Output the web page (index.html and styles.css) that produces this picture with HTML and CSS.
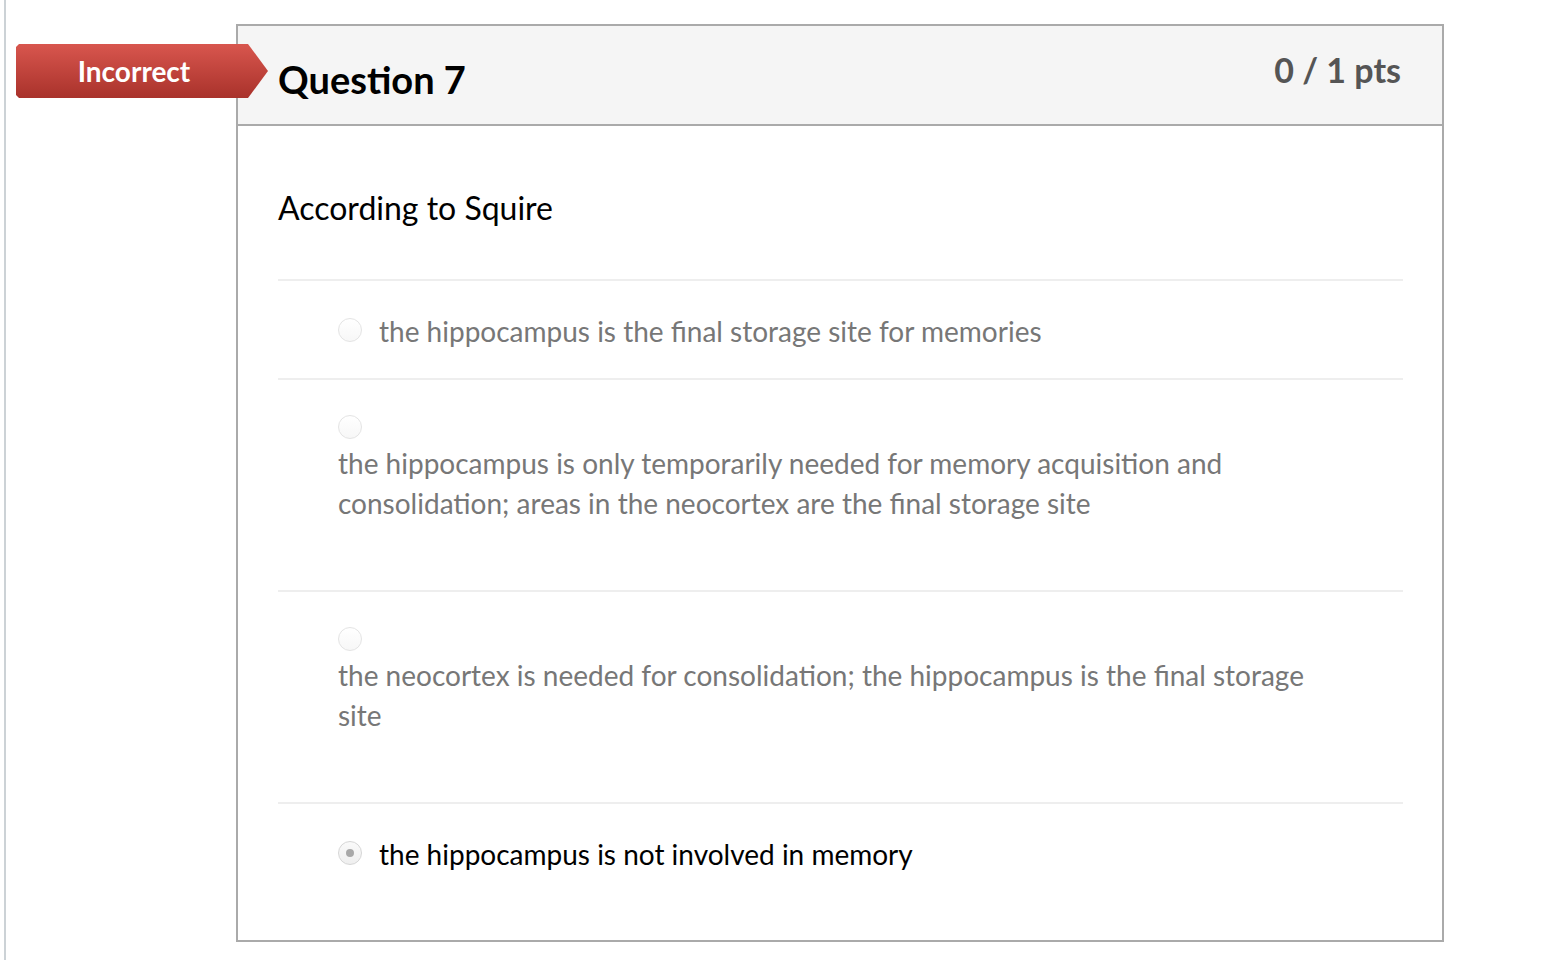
FILE: index.html
```html
<!DOCTYPE html>
<html>
<head>
<meta charset="utf-8">
<link rel="stylesheet" href="styles.css">
</head>
<body>
<div class="page">
  <div class="question-wrap">
    <div class="badge"><span>Incorrect</span></div>
    <div class="card">
      <div class="card-header">
        <h2 class="title">Question 7</h2>
        <div class="pts">0 / 1 pts</div>
      </div>
      <div class="card-body">
        <div class="question-text">According to Squire</div>
        <div class="answers">
          <div class="answer answer-short">
            <span class="radio"></span>
            <span class="answer-text muted">the hippocampus is the final storage site for memories</span>
          </div>
          <div class="answer answer-long">
            <span class="radio"></span>
            <div class="answer-text muted">the hippocampus is only temporarily needed for memory acquisition and consolidation; areas in the neocortex are the final storage site</div>
          </div>
          <div class="answer answer-long">
            <span class="radio"></span>
            <div class="answer-text muted">the neocortex is needed for consolidation; the hippocampus is the final storage site</div>
          </div>
          <div class="answer answer-short last">
            <span class="radio selected"></span>
            <span class="answer-text">the hippocampus is not involved in memory</span>
          </div>
        </div>
      </div>
    </div>
  </div>
</div>
</body>
</html>
```

FILE: styles.css
```css
* { box-sizing: border-box; }
html, body { margin: 0; padding: 0; background: #fff; }
body {
  font-family: Lato, "Open Sans", "Liberation Sans", sans-serif;
  color: #000;
  height: 960px;
  overflow: hidden;
}
.page {
  margin-left: 4px;
  border-left: 2px solid #ccd2d6;
  height: 960px;
  padding-top: 24px;
  padding-left: 230px;
}
.question-wrap {
  position: relative;
  width: 1208px;
}
.badge {
  position: absolute;
  left: -220px;
  top: 20px;
  width: 252px;
  height: 54px;
  background: linear-gradient(#d8564e, #a9322b);
  clip-path: polygon(3px 0, 232px 0, 252px 27px, 232px 54px, 3px 54px, 0 51px, 0 3px);
  display: flex;
  align-items: center;
  z-index: 2;
}
.badge span {
  width: 236px;
  text-align: center;
  color: #fff;
  font-weight: 700;
  font-size: 28px;
}
.card {
  border: 2px solid #aaaaaa;
}
.card-header {
  background: #f5f5f5;
  border-bottom: 2px solid #aaaaaa;
  height: 100px;
  display: flex;
  justify-content: space-between;
  align-items: flex-start;
  padding: 0 41px 0 40px;
}
.title {
  margin: 31px 0 0;
  font-size: 38px;
  line-height: 44px;
  font-weight: 700;
  color: #000;
}
.pts {
  margin-top: 24px;
  font-size: 34px;
  line-height: 40px;
  font-weight: 700;
  color: #555;
}
.card-body {
  padding: 0 39px 0 40px;
}
.question-text {
  font-size: 32px;
  line-height: 42px;
  padding-top: 61px;
  padding-bottom: 50px;
}
.answer {
  border-top: 2px solid #eeeeee;
  padding-left: 60px;
  font-size: 28px;
  line-height: 40px;
}
.answer-short {
  display: flex;
  align-items: center;
  padding-top: 30px;
  padding-bottom: 27px;
}
.answer-short .radio { margin-right: 17px; margin-top: -3px; }
.answer-short.last { padding-bottom: 66px; }
.answer-long {
  padding-top: 35px;
  padding-bottom: 67px;
}
.answer-long .radio { display: block; margin-bottom: 4px; }
.answer-long .answer-text { max-width: 990px; }
.radio {
  width: 24px;
  height: 24px;
  border-radius: 50%;
  border: 1px solid #e4e4e4;
  background: linear-gradient(#ffffff, #f7f7f7);
  flex: none;
  position: relative;
}
.radio.selected { border-color: #d6d6d6; background: linear-gradient(#fafafa, #efefef); }
.radio.selected::after {
  content: "";
  position: absolute;
  left: 7px;
  top: 7px;
  width: 8px;
  height: 8px;
  border-radius: 50%;
  background: #a8a8a8;
}
.muted { color: #777777; }
```
